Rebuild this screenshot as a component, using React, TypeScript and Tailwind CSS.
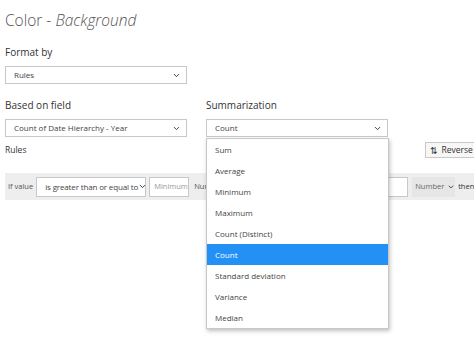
import React from "react";
import { ChevronDown } from "lucide-react";

const font = { fontFamily: '"Open Sans", "Noto Sans", sans-serif' };

const options = [
  "Sum",
  "Average",
  "Minimum",
  "Maximum",
  "Count (Distinct)",
  "Count",
  "Standard deviation",
  "Variance",
  "Median",
];

const Select = ({ value, className = "" }: { value: string; className?: string }) => (
  <div
    className={`flex items-center justify-between h-[18px] border border-[#c8c8c8] bg-white pl-[8px] pr-[5px] text-[8px] text-[#444] ${className}`}
  >
    <span className="whitespace-nowrap">{value}</span>
    <ChevronDown size={9} strokeWidth={2.5} className="text-[#333] shrink-0" />
  </div>
);

const App: React.FC = () => {
  return (
    <div className="w-[474px] h-[345px] overflow-hidden bg-white relative" style={font}>
      <div className="w-[640px] pl-[5px] pt-[8px]">
        {/* TITLE */}
        <h1 className="text-[15.5px] font-light text-[#555] leading-[24px]">
          Color - <i>Background</i>
        </h1>

        {/* FORMAT BY */}
        <div className="mt-[13px] text-[10px] text-[#333] leading-[14px]">Format by</div>
        <Select value="Rules" className="w-[182px] mt-[7px]" />

        {/* FIELD + SUMMARIZATION */}
        <div className="flex gap-[19px] mt-[14px]">
          <div className="w-[182px]">
            <div className="text-[10px] text-[#333] leading-[14px]">Based on field</div>
            <Select value="Count of Date Hierarchy - Year" className="mt-[7px]" />
          </div>
          <div className="w-[182px] relative">
            <div className="text-[10px] text-[#333] leading-[14px]">Summarization</div>
            <Select value="Count" className="mt-[7px]" />

            {/* DROPDOWN LIST */}
            <div className="absolute left-0 top-[40px] w-[183px] z-10 bg-white border border-[#c8c8c8] shadow-[1px_2px_4px_rgba(0,0,0,0.25)]">
              {options.map((o) => (
                <div
                  key={o}
                  className={`h-[21px] flex items-center pl-[8px] text-[8px] ${
                    o === "Count" ? "bg-[#2390f5] text-white" : "text-[#444]"
                  }`}
                >
                  {o}
                </div>
              ))}
            </div>
          </div>
        </div>

        {/* RULES */}
        <div className="flex items-start w-[469px]">
          <span className="text-[8.5px] text-[#333] leading-[14px] mt-[6px]">Rules</span>
          <div className="ml-auto -mr-[30px] mt-[5px] flex items-center h-[16px] border border-[#c8c8c8] bg-[#f7f7f7] pl-[4px] pr-[6px] text-[8.5px] text-[#333] gap-[3px]">
            <span className="text-[9px] leading-none">⇅</span>
            <span>Reverse order</span>
          </div>
        </div>

        {/* RULE ROW */}
        <div className="mt-[15px] h-[27px] bg-[#eeeeee] flex items-center gap-[3px] pl-[3px] text-[7.5px] text-[#555] w-[640px]">
          <span>If value</span>
          <Select
            value="is greater than or equal to"
            className="w-[110px] h-[20px] pl-[3px] pr-[5px] text-[6.8px] tracking-[-0.15px]"
          />
          <div className="w-[40px] h-[20px] border border-[#c8c8c8] bg-white text-[#999] flex items-center pl-[4px]">
            Minimum
          </div>
          <div className="w-[43px] h-[20px] flex items-center pl-[2px] text-[#555]">Number</div>
          <span className="w-[16px] pl-[1px]">and</span>
          <Select value="is less than" className="w-[78px] h-[20px] pl-[4px] text-[7.5px]" />
          <div className="w-[70px] h-[20px] border border-[#c8c8c8] bg-white text-[#999] flex items-center pl-[4px]">
            Maximum
          </div>
          <div className="ml-[1px] w-[43px] h-[20px] flex items-center gap-[3px] pl-[3px] bg-[#e6e6e6] text-[#666]">
            Number
            <ChevronDown size={8} strokeWidth={2.5} className="text-[#333]" />
          </div>
          <span className="text-[#333]">then</span>
        </div>
      </div>
    </div>
  );
};

export default App;
